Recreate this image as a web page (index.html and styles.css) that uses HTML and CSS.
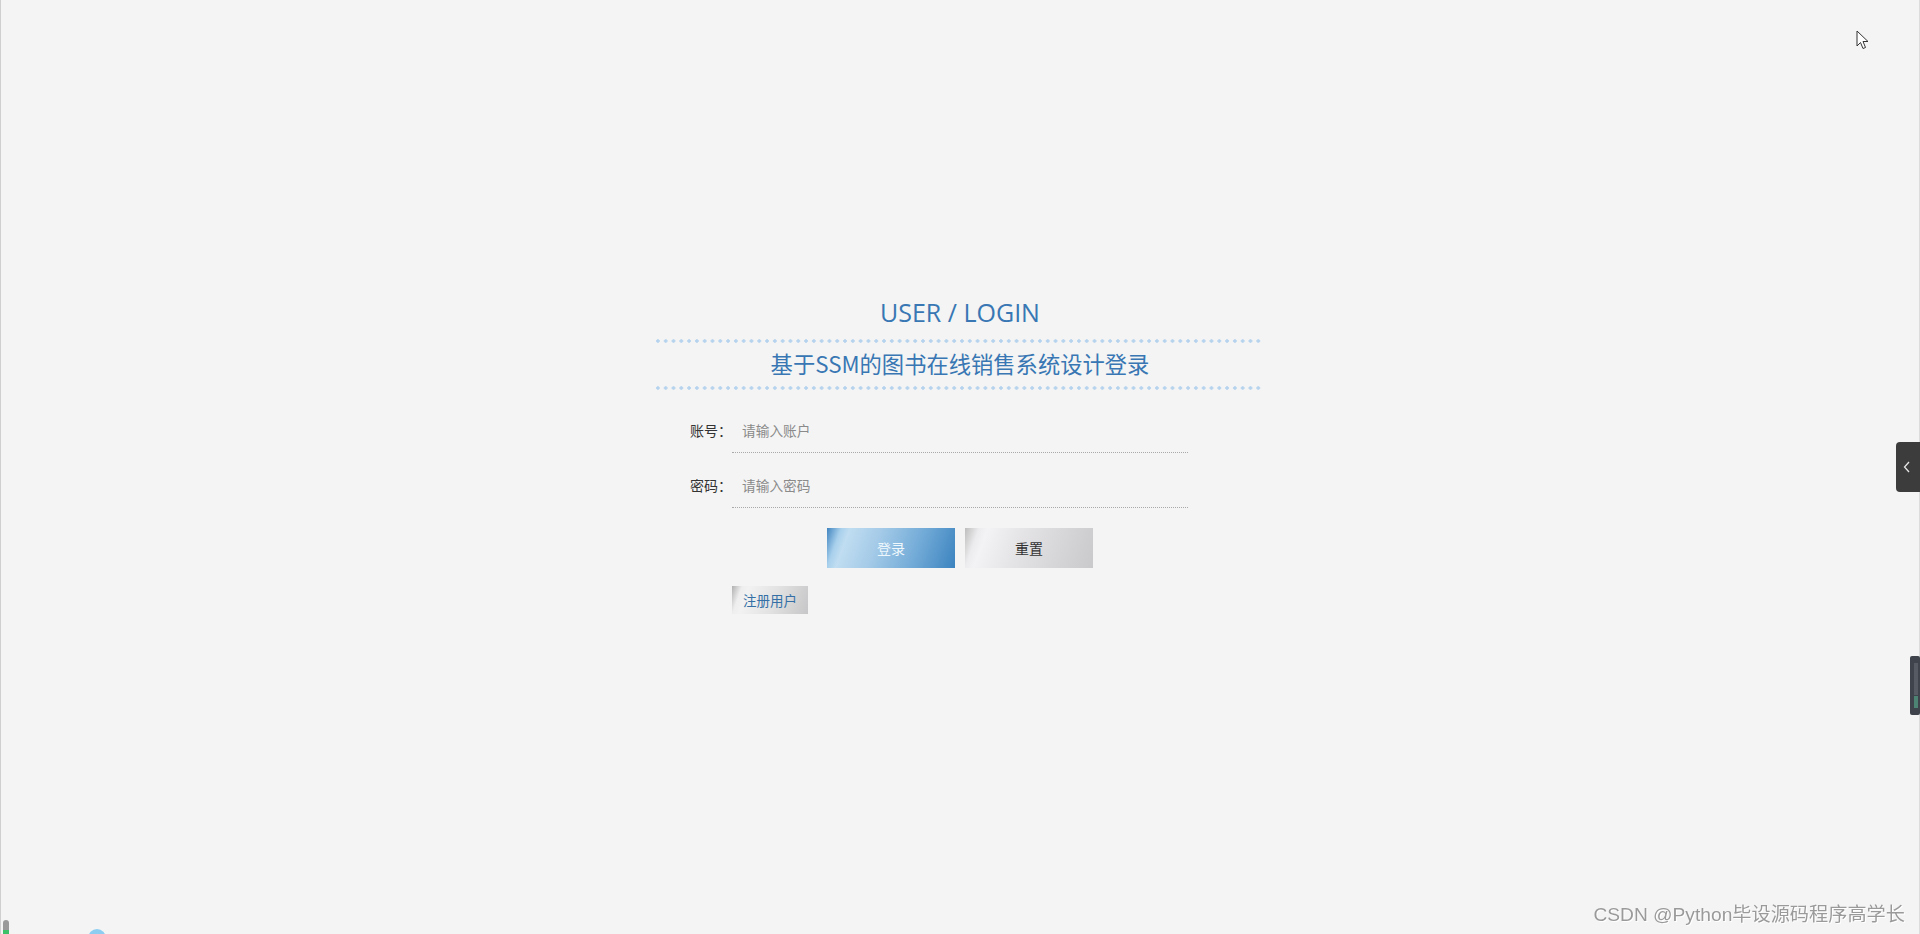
FILE: index.html
```html
<!DOCTYPE html>
<html lang="zh-CN">
<head>
    <meta charset="UTF-8">
    <meta name="viewport" content="width=device-width, initial-scale=1.0">
    <title>登录</title>
    <link rel="stylesheet" href="styles.css">
</head>
<body>
    <div class="login-box">
        <h1 class="title-en">USER / LOGIN</h1>
        <div class="dots"></div>
        <h2 class="title-cn">基于SSM的图书在线销售系统设计登录</h2>
        <div class="dots"></div>

        <form class="login-form">
            <div class="form-row">
                <label for="username">账号：</label>
                <input type="text" id="username" placeholder="请输入账户">
            </div>
            <div class="form-row">
                <label for="password">密码：</label>
                <input type="password" id="password" placeholder="请输入密码">
            </div>
            <div class="btn-row">
                <button type="button" class="btn btn-login">登录</button>
                <button type="reset" class="btn btn-reset">重置</button>
            </div>
            <div class="register-row">
                <a class="register" href="#">注册用户</a>
            </div>
        </form>
    </div>

    <!-- 右侧收起按钮 -->
    <div class="side-tab">
        <svg width="10" height="14" viewBox="0 0 10 14"><path d="M7 2 L2.5 7 L7 12" fill="none" stroke="#e6e6e6" stroke-width="1.3"/></svg>
    </div>
    <div class="side-meter">
        <svg width="10" height="59" viewBox="0 0 10 59">
            <rect x="0" y="0" width="10" height="59" rx="2" fill="#3e434c"/>
            <g stroke="#7b8089" stroke-width="0.8">
                <line x1="4" y1="8" x2="8" y2="8"/><line x1="4" y1="10" x2="8" y2="10"/>
                <line x1="4" y1="12" x2="8" y2="12"/><line x1="4" y1="14" x2="8" y2="14"/>
                <line x1="4" y1="16" x2="8" y2="16"/><line x1="4" y1="18" x2="8" y2="18"/>
                <line x1="4" y1="20" x2="8" y2="20"/><line x1="4" y1="22" x2="8" y2="22"/>
                <line x1="4" y1="24" x2="8" y2="24"/><line x1="4" y1="26" x2="8" y2="26"/>
                <line x1="4" y1="28" x2="8" y2="28"/><line x1="4" y1="30" x2="8" y2="30"/>
                <line x1="4" y1="32" x2="8" y2="32"/><line x1="4" y1="34" x2="8" y2="34"/>
                <line x1="4" y1="36" x2="8" y2="36"/><line x1="4" y1="38" x2="8" y2="38"/>
            </g>
            <g stroke="#5fd3a4" stroke-width="0.9">
                <line x1="4" y1="41" x2="8" y2="41"/><line x1="4" y1="43" x2="8" y2="43"/>
                <line x1="4" y1="45" x2="8" y2="45"/><line x1="4" y1="47" x2="8" y2="47"/>
                <line x1="4" y1="49" x2="8" y2="49"/><line x1="4" y1="51" x2="8" y2="51"/>
            </g>
        </svg>
    </div>

    <div class="cursor">
        <svg width="14" height="20" viewBox="0 0 14 20"><path d="M1 1 L1 16 L4.5 12.5 L7 18.5 L9.5 17.5 L7 11.5 L12 11.5 Z" fill="#fff" stroke="#333" stroke-width="1"/></svg>
    </div>

    <div class="corner-bar"></div>
    <div class="corner-dot"></div>

    <div class="watermark">CSDN @Python毕设源码程序高学长</div>
</body>
</html>
```

FILE: styles.css
```css
html, body {
    height: 100%;
}

body {
    margin: 0;
    background-color: #f4f4f4;
    border-left: 1px solid #cfcfcf;
    border-right: 1px solid #dcdcdc;
    box-sizing: border-box;
    font-family: "Noto Sans CJK SC", "Noto Sans", sans-serif;
    overflow: hidden;
}

.login-box {
    width: 608px;
    padding-top: 295px;
    margin-left: 655px;
}

.title-en {
    margin: 0;
    font-family: "Open Sans", "Noto Sans", sans-serif;
    font-weight: normal;
    font-size: 25px;
    line-height: 34px;
    text-align: center;
    color: #3877b3;
}

.dots {
    height: 4px;
    margin-top: 10px;
    background-image: radial-gradient(circle, #b6d3ee 1.5px, transparent 1.9px);
    background-size: 7.8px 4px;
    background-position: -2px 0;
    background-repeat: repeat-x;
}

.title-cn {
    margin: 3px 0 5px;
    font-weight: normal;
    font-size: 22.3px;
    line-height: 34px;
    text-align: center;
    color: #3877b3;
}

.title-cn + .dots {
    margin-top: 6px;
}

.login-form {
    margin-top: 21px;
}

.form-row {
    display: flex;
    align-items: flex-start;
    margin-bottom: 13px;
}

.form-row label {
    width: 76px;
    flex-shrink: 0;
    padding-top: 4px;
    line-height: 30px;
    text-align: right;
    font-size: 14px;
    color: #333;
}

.form-row input {
    width: 456px;
    height: 42px;
    box-sizing: border-box;
    padding: 4px 10px 7px;
    line-height: 30px;
    border: none;
    border-bottom: 1px dotted #a9a9a9;
    background: transparent;
    font-family: "Noto Sans CJK SC", sans-serif;
    font-size: 13.7px;
    color: #333;
    outline: none;
}

.form-row input::placeholder {
    color: #8a8a8a;
}

.btn-row {
    display: flex;
    justify-content: center;
    gap: 10px;
    margin-top: 20px;
}

.btn {
    width: 128px;
    height: 40px;
    border: none;
    font-family: "Noto Sans CJK SC", sans-serif;
    font-size: 14px;
    cursor: pointer;
}

.btn-login {
    color: #eef7fc;
    background: linear-gradient(110deg, #3f83bf 0%, #a8d0ec 10%, #c0ddf1 16%, #a5cbe8 38%, #74acd8 68%, #3b83bf 100%);
}

.btn-reset {
    color: #333;
    background: linear-gradient(110deg, #bdbdbd 0%, #ececee 10%, #f3f3f5 16%, #e4e4e6 42%, #d6d6d9 72%, #c9c9cc 100%);
}

.register-row {
    margin-top: 18px;
    padding-left: 76px;
}

.register {
    display: inline-block;
    width: 76px;
    height: 28px;
    line-height: 28px;
    text-align: center;
    font-size: 13.5px;
    color: #3470a6;
    text-decoration: none;
    background: linear-gradient(110deg, #b0b0b0 0%, #eeeeee 12%, #f2f2f2 20%, #e2e2e2 55%, #c6c6c8 100%);
}

.side-tab {
    position: fixed;
    right: 0;
    top: 442px;
    width: 24px;
    height: 50px;
    background-color: #3c3c3c;
    border-radius: 4px 0 0 4px;
    display: flex;
    align-items: center;
    justify-content: center;
}

.side-tab svg {
    display: block;
    margin-left: -2px;
}

.side-meter {
    position: fixed;
    right: 0;
    top: 656px;
    width: 10px;
    height: 59px;
}

.side-meter svg,
.cursor svg {
    display: block;
}

.cursor {
    position: fixed;
    left: 1856px;
    top: 30px;
}

.corner-bar {
    position: fixed;
    left: 3px;
    bottom: 0;
    width: 6px;
    height: 14px;
    border-radius: 3px 3px 0 0;
    background: linear-gradient(#9a9a9a 0, #9a9a9a 10px, #3cc06a 10px);
}

.corner-dot {
    position: fixed;
    left: 88px;
    bottom: -13px;
    width: 18px;
    height: 18px;
    border-radius: 50%;
    background-color: #8dcdf2;
}

.watermark {
    position: fixed;
    right: 15px;
    bottom: 6px;
    font-family: "Liberation Sans", "Noto Sans CJK SC", sans-serif;
    font-size: 19.2px;
    line-height: 26px;
    color: #9a9a9a;
    text-shadow: 0 0 1px #fff, 1px 1px 0 #fff;
}
```
